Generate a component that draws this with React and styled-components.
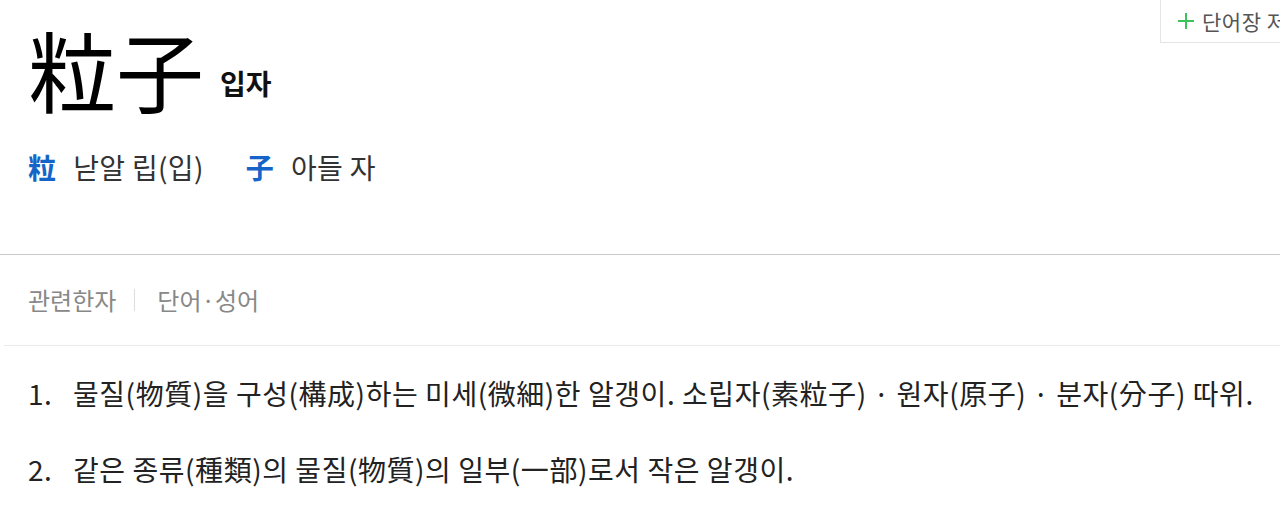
import styled, { createGlobalStyle } from "styled-components";

const Global = createGlobalStyle`
    html, body {
        margin: 0;
        padding: 0;
        background: #fff;
    }
    body {
        font-family: "Noto Sans CJK KR", "Noto Sans", sans-serif;
        color: #222;
    }
`

const Page = styled.div`
    width: 1280px;
    height: 514px;
    overflow: hidden;
`

const Header = styled.div`
    display: flex;
    justify-content: space-between;
    align-items: flex-start;
    padding-left: 28px;
`

const TitleBlock = styled.div`
    padding-top: 20px;
`

const TitleRow = styled.div`
    display: flex;
    align-items: flex-end;
    gap: 16px;
`

const Title = styled.h1`
    margin: 0;
    font-size: 88px;
    font-weight: 400;
    line-height: 1.1;
    color: #000;
`

const Reading = styled.span`
    font-size: 28px;
    font-weight: 700;
    line-height: 1;
    color: #111;
    padding-bottom: 20px;
`

const MeaningRow = styled.div`
    display: flex;
    align-items: center;
    gap: 42px;
    margin-top: 32px;
    height: 36px;
`

const Meaning = styled.div`
    display: flex;
    align-items: center;
    gap: 17px;
    font-size: 28px;
    letter-spacing: 0.3px;
    color: #333;
`

const Hanja = styled.span`
    font-size: 28px;
    font-weight: 700;
    color: #1565c8;
`

const SaveButton = styled.button`
    display: flex;
    align-items: center;
    gap: 7px;
    width: 170px;
    height: 44px;
    margin-top: -1px;
    margin-right: -50px;
    padding: 0 0 0 16px;
    background: #fff;
    border: 1px solid #e4e4e4;
    font-family: inherit;
    font-size: 21px;
    letter-spacing: 0.5px;
    color: #555;
    white-space: nowrap;
    cursor: pointer;
`

const Plus = styled.svg`
    width: 18px;
    height: 18px;
    flex: none;
`

const Divider = styled.hr`
    margin: 0;
    border: 0;
    border-top: 1px solid ${p => p.$light ? "#ececec" : "#c9c9c9"};
    margin-left: ${p => p.$inset || 0}px;
`

const Tabs = styled.div`
    display: flex;
    align-items: center;
    height: 90px;
    padding-left: 28px;
    font-size: 24px;
    color: #888;
`

const Tab = styled.span`
    display: flex;
    align-items: center;
`

const TabSep = styled.span`
    width: 1px;
    height: 22px;
    background: #ddd;
    margin: 0 22px 0 18px;
`

const List = styled.ol`
    list-style: none;
    margin: 0;
    padding: 29px 0 0 28px;
    display: flex;
    flex-direction: column;
    gap: 40px;
`

const Item = styled.li`
    display: flex;
    font-size: 28px;
    line-height: 36px;
    letter-spacing: 0.55px;
    color: #222;
    white-space: nowrap;
`

const Num = styled.span`
    width: 45px;
    flex: none;
`

const App = () => {
    return (
        <Page>
            <Global />
            <Header>
                <TitleBlock>
                    <TitleRow>
                        <Title>粒子</Title>
                        <Reading>입자</Reading>
                    </TitleRow>
                    <MeaningRow>
                        <Meaning>
                            <Hanja>粒</Hanja>
                            <span>낟알 립(입)</span>
                        </Meaning>
                        <Meaning>
                            <Hanja>子</Hanja>
                            <span>아들 자</span>
                        </Meaning>
                    </MeaningRow>
                </TitleBlock>
                <SaveButton>
                    <Plus viewBox="0 0 18 18">
                        <path d="M9 1v16M1 9h16" stroke="#3cc35a" strokeWidth="2" />
                    </Plus>
                    단어장 저장
                </SaveButton>
            </Header>
            <Divider style={{ marginTop: 69 }} />
            <Tabs>
                <Tab>관련한자</Tab>
                <TabSep />
                <Tab>단어·성어</Tab>
            </Tabs>
            <Divider $light $inset={4} />
            <List>
                <Item>
                    <Num>1.</Num>
                    물질(物質)을 구성(構成)하는 미세(微細)한 알갱이. 소립자(素粒子) · 원자(原子) · 분자(分子) 따위.
                </Item>
                <Item>
                    <Num>2.</Num>
                    같은 종류(種類)의 물질(物質)의 일부(一部)로서 작은 알갱이.
                </Item>
            </List>
        </Page>
    )
}

export default App
